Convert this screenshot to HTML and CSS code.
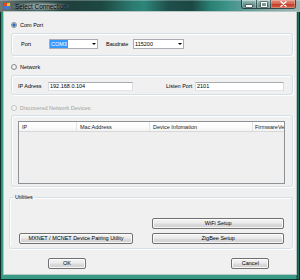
FILE: index.html
```html
<!DOCTYPE html>
<html>
<head>
<meta charset="utf-8">
<title>Select Connection</title>
<link rel="stylesheet" href="styles.css">
</head>
<body>
<div class="window">
  <div class="titlebar">
    <svg class="app-icon" width="8" height="8" viewBox="0 0 8 8">
      <rect x="0.5" y="0.5" width="7" height="7" fill="#f4f4f4" stroke="#6b6b6b" stroke-width="1"/>
      <rect x="1" y="1" width="3" height="3" fill="#e0452c"/>
      <rect x="4" y="1" width="3" height="3" fill="#f3c324"/>
      <rect x="1" y="4" width="6" height="3" fill="#3d7bd6"/>
    </svg>
    <span class="title">Select Connection</span>
    <div class="caption-buttons">
      <div class="cap cap-min"><span class="min-bar"></span></div>
      <div class="cap cap-max"><span class="max-box"></span></div>
      <div class="cap cap-close">
        <svg width="7" height="6" viewBox="0 0 7 6"><path d="M1 0.8 L6 5.2 M6 0.8 L1 5.2" stroke="#fff" stroke-width="1.4" stroke-linecap="round"/></svg>
      </div>
    </div>
  </div>
  <div class="frame">
    <div class="client">
      <div class="radio-row">
        <span class="radio checked"></span>
        <span>Com Port</span>
      </div>
      <div class="group group-com">
        <span class="lbl lbl-port">Port</span>
        <div class="combo combo-port">
          <span class="combo-val selected">COM3</span>
          <span class="arrow"></span>
        </div>
        <span class="lbl lbl-baud">Baudrate</span>
        <div class="combo combo-baud">
          <span class="combo-val">115200</span>
          <span class="arrow"></span>
        </div>
      </div>

      <div class="radio-row row-net">
        <span class="radio"></span>
        <span>Network</span>
      </div>
      <div class="group group-net">
        <span class="lbl lbl-ip">IP Adress</span>
        <div class="textbox tb-ip">192.168.0.104</div>
        <span class="lbl lbl-listen">Listen Port</span>
        <div class="textbox tb-listen">2101</div>
      </div>

      <div class="radio-row row-disc disabled">
        <span class="radio"></span>
        <span>Discovered Network Devices:</span>
      </div>
      <div class="group group-disc">
        <div class="listview">
          <div class="lv-header">
            <span class="col col-ip">IP</span>
            <span class="col col-mac">Mac Address</span>
            <span class="col col-dev">Device Infomation</span>
            <span class="col col-fw">FirmwareVe</span>
          </div>
          <div class="lv-body"></div>
        </div>
      </div>

      <fieldset class="util">
        <legend>Utilities</legend>
        <div class="util-grid">
          <button class="btn btn-wifi">WiFi Setup</button>
          <button class="btn btn-pair">MXNET / MCNET Device Pairing Utility</button>
          <button class="btn btn-zig">ZigBee Setup</button>
        </div>
      </fieldset>

      <div class="dialog-buttons">
        <button class="btn btn-dlg">OK</button>
        <button class="btn btn-dlg">Cancel</button>
      </div>
    </div>
  </div>
</div>
</body>
</html>
```
FILE: styles.css
```css
* { box-sizing: border-box; }
html, body { margin: 0; padding: 0; }
body {
  width: 300px;
  height: 280px;
  overflow: hidden;
  font-family: "Liberation Sans", Arial, sans-serif;
  font-size: 5.5px;
  color: #000;
  background: #1d4f49;
}
.window {
  width: 300px;
  height: 280px;
  display: flex;
  flex-direction: column;
  background:
    linear-gradient(90deg, #163a35 0px, #2c8c74 1px, #38a385 3px, rgba(56,163,133,0) 4px, rgba(56,163,133,0) 296px, #1d3b37 297px, #2a7f6d 299px),
    linear-gradient(180deg, #21524c 0%, #25695d 45%, #2f8a76 85%, #3a9c88 100%);
  box-shadow: inset 0 0 0 1px #112a27;
}

/* ---------- title bar ---------- */
.titlebar {
  height: 12px;
  flex: none;
  display: flex;
  align-items: center;
  background: linear-gradient(90deg,
    #6d7b7a 0%, #4a5f5d 6%, #2b4744 16%, #1f403d 24%, #1e4843 34%,
    #2b7a70 44%, #2f867b 48%, #1f4f4a 56%, #1b4844 64%,
    #2a7e72 70%, #3f948a 76%, #5e9b96 81%, #86a9a6 90%, #9cb6b4 100%);
  box-shadow: inset 0 1px 0 rgba(255,255,255,.25);
}
.app-icon {
  flex: none;
  margin-left: 3px;
}
.title {
  margin-left: 2px;
  padding: 0 2px;
  font-size: 6.4px;
  line-height: 9px;
  color: #000;
  background: radial-gradient(ellipse at center, rgba(200,210,210,.6) 35%, rgba(200,210,210,0) 75%);
  white-space: nowrap;
}
.caption-buttons {
  margin-left: auto;
  margin-right: 4px;
  align-self: flex-start;
  display: flex;
  height: 9px;
  border: 1px solid rgba(20,40,40,.75);
  border-top: none;
  border-radius: 0 0 3px 3px;
  overflow: hidden;
}
.cap {
  height: 100%;
  display: flex;
  align-items: center;
  justify-content: center;
  background: linear-gradient(180deg, rgba(200,220,218,.55) 0%, rgba(120,150,148,.45) 50%, rgba(70,100,98,.5) 100%);
  box-shadow: inset 0 0 0 1px rgba(255,255,255,.25);
}
.cap-min { width: 15px; border-right: 1px solid rgba(20,40,40,.6); }
.cap-max { width: 14px; border-right: 1px solid rgba(20,40,40,.6); }
.cap-close {
  width: 24px;
  background: linear-gradient(180deg, #e3907f 0%, #d6664f 45%, #c2412c 55%, #d25b43 100%);
}
.min-bar {
  width: 6px;
  height: 2px;
  margin-top: 3px;
  background: #fff;
  box-shadow: 0 0 0 0.5px #333;
}
.max-box {
  width: 6px;
  height: 5px;
  border: 1px solid #fff;
  border-top-width: 1.5px;
  box-shadow: 0 0 0 0.5px #333;
}

/* ---------- frame / client ---------- */
.frame {
  flex: 1;
  display: flex;
  padding: 0 4px 6px 4px;
}
.client {
  flex: 1;
  background: #f0f0f0;
  box-shadow: 0 0 0 1px #b7c9c5;
  padding: 8px 3px 0 0;
  display: flex;
  flex-direction: column;
}

/* radio rows */
.radio-row {
  height: 10px;
  display: flex;
  align-items: center;
  gap: 3px;
  padding-left: 7px;
  white-space: nowrap;
}
.radio {
  flex: none;
  width: 6px;
  height: 6px;
  border-radius: 50%;
  border: 1px solid #8a8d90;
  background: radial-gradient(circle at 45% 40%, #ffffff 0%, #e6e6e6 60%, #d0d0d0 100%);
}
.radio.checked {
  background: radial-gradient(circle at 50% 50%, #1e4f93 0px, #3f7fc9 1.3px, #8fb3dc 1.8px, #ececec 2.1px, #f8f8f8 100%);
}
.disabled { color: #a3a3a3; }
.disabled .radio {
  border-color: #c4c4c4;
  background: #f4f4f4;
}
.row-net { margin-top: 6px; }
.row-disc { margin-top: 8px; }

/* group boxes */
.group {
  margin-left: 7px;
  border: 1px solid #d5dfe5;
  border-radius: 3px;
  box-shadow: inset 1px 1px 0 #fff, 1px 1px 0 #fff;
  display: flex;
  align-items: center;
}
.group-com {
  margin-top: 3px;
  height: 23px;
  padding: 0 0 1px 9px;
}
.group-net {
  margin-top: 3px;
  height: 20px;
  padding: 2px 0 0 6px;
}
.group-disc {
  margin-top: 2px;
  height: 72px;
  padding: 5px 7px 2px 6px;
  align-items: stretch;
}

.lbl { white-space: nowrap; }
.lbl-port { width: 28px; }
.lbl-baud { width: 27px; margin-left: 8px; }
.lbl-ip { width: 30px; }
.lbl-listen { width: 29px; margin-left: 33px; }

/* combo boxes */
.combo {
  height: 10px;
  border: 1px solid #abadb3;
  background: #fff;
  display: flex;
  align-items: stretch;
  padding: 0;
}
.combo-port { width: 49px; }
.combo-baud { width: 51px; }
.combo-val {
  display: flex;
  align-items: center;
  padding: 0 1px;
  line-height: 8px;
}
.selected {
  background: #3399ff;
  color: #fff;
}
.arrow {
  margin-left: auto;
  margin-right: 1.5px;
  align-self: center;
  width: 0;
  height: 0;
  border-left: 2px solid transparent;
  border-right: 2px solid transparent;
  border-top: 2.5px solid #000;
}

/* text boxes */
.textbox {
  height: 9px;
  line-height: 7px;
  padding: 0 1px;
  background: #fff;
  border: 1px solid;
  border-color: #a9abb2 #dadce3 #e1e5ea #dadce3;
  white-space: nowrap;
}
.tb-ip { width: 85px; }
.tb-listen { width: 89px; }

/* list view */
.listview {
  flex: 1;
  display: flex;
  flex-direction: column;
  border: 1px solid #8e9195;
  background: #efefef;
}
.lv-header {
  height: 10px;
  flex: none;
  display: flex;
  background: linear-gradient(180deg, #ffffff 0%, #fbfbfb 60%, #f3f3f3 100%);
  border-bottom: 1px solid #d8d8d8;
  overflow: hidden;
}
.col {
  display: flex;
  align-items: center;
  padding-left: 3px;
  color: #222;
  white-space: nowrap;
  overflow: hidden;
  border-right: 1px solid #e3e3e3;
}
.col-ip { width: 58px; }
.col-mac { width: 73px; }
.col-dev { width: 103px; }
.col-fw { flex: 1; border-right: none; padding-left: 2px; }
.lv-body { flex: 1; }

/* utilities */
.util {
  margin: 7px 0 0 5px;
  padding: 18px 8px 4px 4px;
  border: 1px solid #d5dfe5;
  border-radius: 3px;
  box-shadow: inset 1px 1px 0 #fff, 1px 1px 0 #fff;
  min-width: 0;
}
.util legend {
  padding: 0 1px;
  line-height: 6px;
  font-size: 5.5px;
}
.util-grid {
  margin-left: 5px;
  display: grid;
  grid-template-columns: 114px 1fr;
  grid-template-rows: 11px 11px;
  column-gap: 19px;
  row-gap: 4px;
}
.btn-wifi { grid-column: 2; grid-row: 1; }
.btn-pair { grid-column: 1; grid-row: 2; }
.btn-zig { grid-column: 2; grid-row: 2; }

/* buttons */
.btn {
  font-family: "Liberation Sans", Arial, sans-serif;
  font-size: 5.5px;
  color: #000;
  height: 11px;
  margin: 0;
  padding: 0;
  border: 1px solid #707070;
  border-radius: 2px;
  background: linear-gradient(180deg, #f3f3f3 0%, #ebebeb 48%, #dddddd 52%, #cfcfcf 100%);
  box-shadow: inset 0 0 0 1px rgba(255,255,255,.8);
  line-height: 9px;
  white-space: nowrap;
}

.dialog-buttons {
  margin-top: 9px;
  display: flex;
  justify-content: space-between;
  padding: 0 24px 0 44px;
}
.btn-dlg { width: 38px; }
```
